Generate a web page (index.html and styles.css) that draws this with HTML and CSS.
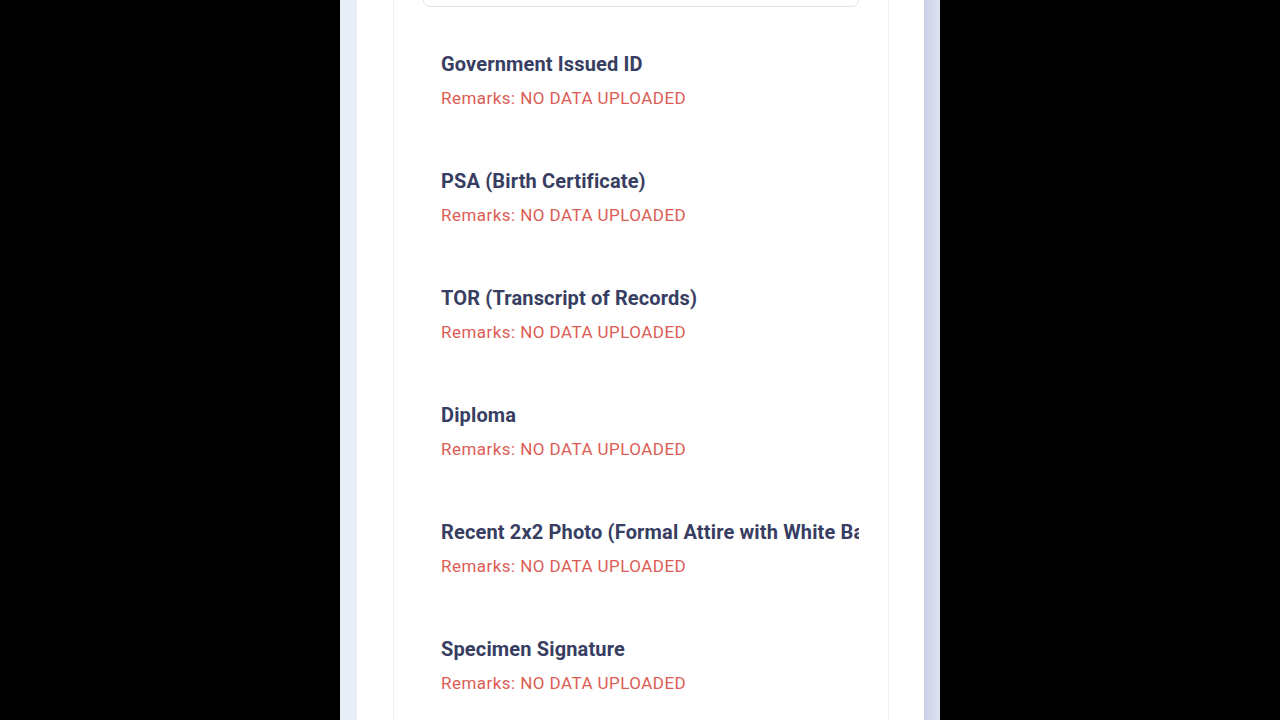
FILE: index.html
```html
<!DOCTYPE html>
<html lang="en">
<head>
<meta charset="utf-8">
<title>Requirements</title>
<link rel="stylesheet" href="styles.css">
</head>
<body>
<div class="phone">
  <div class="edge-left"></div>
  <main class="screen">
    <section class="card">
      <div class="search-box"></div>
      <ul class="doc-list">
        <li class="doc">
          <div class="doc-title">Government Issued ID</div>
          <div class="doc-remarks">Remarks: NO DATA UPLOADED</div>
        </li>
        <li class="doc">
          <div class="doc-title">PSA (Birth Certificate)</div>
          <div class="doc-remarks">Remarks: NO DATA UPLOADED</div>
        </li>
        <li class="doc">
          <div class="doc-title">TOR (Transcript of Records)</div>
          <div class="doc-remarks">Remarks: NO DATA UPLOADED</div>
        </li>
        <li class="doc">
          <div class="doc-title">Diploma</div>
          <div class="doc-remarks">Remarks: NO DATA UPLOADED</div>
        </li>
        <li class="doc">
          <div class="doc-title">Recent 2x2 Photo (Formal Attire with White Background)</div>
          <div class="doc-remarks">Remarks: NO DATA UPLOADED</div>
        </li>
        <li class="doc">
          <div class="doc-title">Specimen Signature</div>
          <div class="doc-remarks">Remarks: NO DATA UPLOADED</div>
        </li>
      </ul>
    </section>
  </main>
  <div class="edge-right"></div>
</div>
</body>
</html>
```

FILE: styles.css
```css
* { box-sizing: border-box; }

html, body {
  margin: 0;
  padding: 0;
  height: 100%;
  background: #000;
  overflow: hidden;
}

body {
  display: flex;
  justify-content: center;
  font-family: Roboto, "Liberation Sans", sans-serif;
}

.phone {
  width: 600px;
  height: 720px;
  display: grid;
  grid-template-columns: 17px 1fr 16px;
  overflow: hidden;
}

.edge-left {
  background: #e9eef6;
}

.edge-right {
  background: linear-gradient(to right, #c9d0e7, #dfe3ef);
}

.screen {
  background: #fff;
  padding: 0 35px 0 36px;
  overflow: hidden;
}

.card {
  margin-top: -40px;
  border-left: 1px solid #eceef2;
  border-right: 1px solid #eceef2;
  padding: 0 29px;
  height: 800px;
}

.search-box {
  height: 47px;
  border: 1px solid #e2e4e8;
  border-radius: 7px;
}

.doc-list {
  list-style: none;
  margin: 45px 0 0;
  padding: 0;
}

.doc {
  padding: 0 0 0 18px;
  margin-bottom: 61px;
  overflow: hidden;
}

.doc-title {
  font-size: 20px;
  line-height: 24px;
  font-weight: 700;
  letter-spacing: 0.15px;
  color: #373e62;
  white-space: nowrap;
  overflow: hidden;
}

.doc-remarks {
  margin-top: 12px;
  font-size: 17px;
  line-height: 20px;
  letter-spacing: 0.45px;
  color: #dc5d55;
  white-space: nowrap;
}
```
